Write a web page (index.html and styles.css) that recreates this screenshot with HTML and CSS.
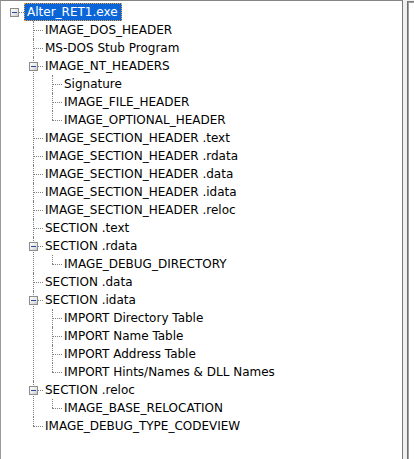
FILE: index.html
```html
<!DOCTYPE html>
<html lang="en">
<head>
  <meta charset="UTF-8">
  <title>PE Structure</title>
  <link rel="stylesheet" href="styles.css">
</head>
<body>
  <div class="tree-pane">
    <ul class="tree">
      <li class="root open">
        <span class="toggle"></span>
        <span class="label selected">Alter_RET1.exe</span>
        <ul>
          <li><span class="label">IMAGE_DOS_HEADER</span></li>
          <li><span class="label">MS-DOS Stub Program</span></li>
          <li class="open">
            <span class="toggle"></span>
            <span class="label">IMAGE_NT_HEADERS</span>
            <ul>
              <li><span class="label">Signature</span></li>
              <li><span class="label">IMAGE_FILE_HEADER</span></li>
              <li><span class="label">IMAGE_OPTIONAL_HEADER</span></li>
            </ul>
          </li>
          <li><span class="label">IMAGE_SECTION_HEADER .text</span></li>
          <li><span class="label">IMAGE_SECTION_HEADER .rdata</span></li>
          <li><span class="label">IMAGE_SECTION_HEADER .data</span></li>
          <li><span class="label">IMAGE_SECTION_HEADER .idata</span></li>
          <li><span class="label">IMAGE_SECTION_HEADER .reloc</span></li>
          <li><span class="label">SECTION .text</span></li>
          <li class="open">
            <span class="toggle"></span>
            <span class="label">SECTION .rdata</span>
            <ul>
              <li><span class="label">IMAGE_DEBUG_DIRECTORY</span></li>
            </ul>
          </li>
          <li><span class="label">SECTION .data</span></li>
          <li class="open">
            <span class="toggle"></span>
            <span class="label">SECTION .idata</span>
            <ul>
              <li><span class="label">IMPORT Directory Table</span></li>
              <li><span class="label">IMPORT Name Table</span></li>
              <li><span class="label">IMPORT Address Table</span></li>
              <li><span class="label">IMPORT Hints/Names &amp; DLL Names</span></li>
            </ul>
          </li>
          <li class="open">
            <span class="toggle"></span>
            <span class="label">SECTION .reloc</span>
            <ul>
              <li><span class="label">IMAGE_BASE_RELOCATION</span></li>
            </ul>
          </li>
          <li><span class="label">IMAGE_DEBUG_TYPE_CODEVIEW</span></li>
        </ul>
      </li>
    </ul>
  </div>
  <div class="splitter"></div>
  <div class="side-pane"></div>
</body>
</html>
```

FILE: styles.css
```css
body {
  margin: 0;
  height: 459px;
  display: flex;
  background: #f0f0f0;
  font-family: "DejaVu Sans", Verdana, sans-serif;
  font-size: 12px;
  color: #000;
  overflow: hidden;
}
.tree-pane {
  width: 401px;
  background: #fff;
  border-top: 1px solid #858585;
  border-left: 1px solid #9a9a9a;
  border-right: 1px solid #7a7a7a;
}
.splitter {
  width: 4px;
  background: #f0f0f0;
}
.side-pane {
  flex: 1;
  margin-top: 1px;
  background: #fff;
  border-top: 1px solid #808080;
  border-left: 1px solid #6f6f6f;
  box-shadow: inset 1px 1px 0 #a0a0a0;
}
.tree, .tree ul {
  list-style: none;
  margin: 0;
  padding: 0;
}
.tree {
  padding: 2px 0 0 4px;
}
.tree ul {
  padding-left: 19px;
}
.tree li {
  position: relative;
}
.label {
  display: inline-block;
  height: 18px;
  line-height: 18px;
  margin-left: 19px;
  padding: 0 2px;
  white-space: nowrap;
}
.label.selected {
  height: 16px;
  line-height: 16px;
  padding: 0 3px 0 2px;
  background: #0a66d8;
  color: #fff;
  border: 1px dotted #f5a030;
}
/* tree lines */
.tree ul li::before {
  content: "";
  position: absolute;
  left: 9px;
  top: 0;
  bottom: 0;
  border-left: 1px dotted #808080;
}
.tree ul li:last-child::before {
  bottom: auto;
  height: 9px;
}
.tree li::after {
  content: "";
  position: absolute;
  left: 9px;
  top: 9px;
  width: 10px;
  border-top: 1px dotted #808080;
}
.tree li.root::after {
  left: 13px;
  width: 6px;
}
.toggle {
  position: absolute;
  left: 5px;
  top: 5px;
  width: 7px;
  height: 7px;
  border: 1px solid #8c8c8c;
  background: linear-gradient(135deg, #ffffff 0%, #e6e6e6 60%, #c8c8c8 100%);
  z-index: 1;
}
.toggle::after {
  content: "";
  position: absolute;
  left: 1px;
  top: 3px;
  width: 5px;
  height: 1px;
  background: #2b4a9a;
}
```
